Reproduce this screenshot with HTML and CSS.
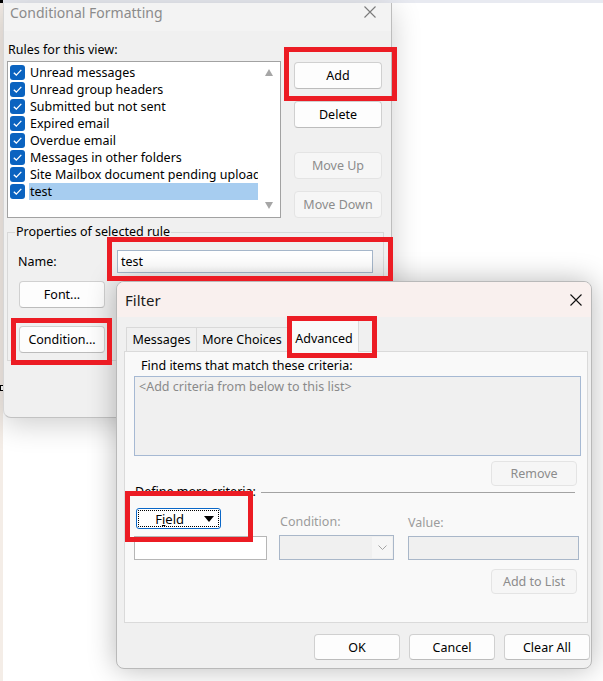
FILE: index.html
```html
<!DOCTYPE html>
<html lang="en">
<head>
  <meta charset="UTF-8" />
  <title>Conditional Formatting</title>
  <link rel="stylesheet" href="styles.css">
</head>
<body>
  <div class="desk-top"></div>
  <div class="desk-left"></div>
  <div class="desk-mark corner"></div>
  <div class="desk-mark square"></div>

  <!-- Conditional Formatting dialog -->
  <div class="dialog cf">
    <div class="cf-title">
      <span>Conditional Formatting</span>
      <svg class="close" width="12" height="12" viewBox="0 0 12 12"><path d="M0.5 0.5 L11.5 11.5 M11.5 0.5 L0.5 11.5" stroke="#7a7a7a" stroke-width="1.1" fill="none"/></svg>
    </div>
    <div class="cf-body">
      <div class="rules-row">
        <div class="rules-col">
          <div class="label">Rules for this view:</div>
          <div class="rule-list">
            <div class="rule-items">
              <div class="rule"><span class="check"><svg width="15" height="15" viewBox="0 0 15 15"><path d="M3.8 7.8 L6.3 10.1 L11.3 4.9" stroke="#fff" stroke-width="1.3" fill="none"/></svg></span><span class="rule-name">Unread messages</span></div>
              <div class="rule"><span class="check"><svg width="15" height="15" viewBox="0 0 15 15"><path d="M3.8 7.8 L6.3 10.1 L11.3 4.9" stroke="#fff" stroke-width="1.3" fill="none"/></svg></span><span class="rule-name">Unread group headers</span></div>
              <div class="rule"><span class="check"><svg width="15" height="15" viewBox="0 0 15 15"><path d="M3.8 7.8 L6.3 10.1 L11.3 4.9" stroke="#fff" stroke-width="1.3" fill="none"/></svg></span><span class="rule-name">Submitted but not sent</span></div>
              <div class="rule"><span class="check"><svg width="15" height="15" viewBox="0 0 15 15"><path d="M3.8 7.8 L6.3 10.1 L11.3 4.9" stroke="#fff" stroke-width="1.3" fill="none"/></svg></span><span class="rule-name">Expired email</span></div>
              <div class="rule"><span class="check"><svg width="15" height="15" viewBox="0 0 15 15"><path d="M3.8 7.8 L6.3 10.1 L11.3 4.9" stroke="#fff" stroke-width="1.3" fill="none"/></svg></span><span class="rule-name">Overdue email</span></div>
              <div class="rule"><span class="check"><svg width="15" height="15" viewBox="0 0 15 15"><path d="M3.8 7.8 L6.3 10.1 L11.3 4.9" stroke="#fff" stroke-width="1.3" fill="none"/></svg></span><span class="rule-name">Messages in other folders</span></div>
              <div class="rule"><span class="check"><svg width="15" height="15" viewBox="0 0 15 15"><path d="M3.8 7.8 L6.3 10.1 L11.3 4.9" stroke="#fff" stroke-width="1.3" fill="none"/></svg></span><span class="rule-name">Site Mailbox document pending upload</span></div>
              <div class="rule selected"><span class="check"><svg width="15" height="15" viewBox="0 0 15 15"><path d="M3.8 7.8 L6.3 10.1 L11.3 4.9" stroke="#fff" stroke-width="1.3" fill="none"/></svg></span><span class="rule-name">test</span></div>
            </div>
            <div class="scrollbar">
              <span class="arrow up"></span>
              <span class="arrow down"></span>
            </div>
          </div>
        </div>
        <div class="rule-buttons">
          <button class="btn">Add</button>
          <button class="btn">Delete</button>
          <button class="btn disabled">Move Up</button>
          <button class="btn disabled">Move Down</button>
        </div>
      </div>

      <fieldset class="props">
        <legend>Properties of selected rule</legend>
        <div class="props-body">
          <div class="name-row">
            <span class="name-label">Name:</span>
            <div class="textbox">test</div>
          </div>
          <button class="btn small font-btn">Font...</button>
          <button class="btn small cond-btn">Condition...</button>
        </div>
      </fieldset>
    </div>
  </div>

  <!-- Filter dialog -->
  <div class="dialog filter">
    <div class="filter-title">
      <span>Filter</span>
      <svg class="close" width="12" height="12" viewBox="0 0 12 12"><path d="M0.5 0.5 L11.5 11.5 M11.5 0.5 L0.5 11.5" stroke="#111" stroke-width="1.1" fill="none"/></svg>
    </div>
    <div class="tabs">
      <div class="tab first">Messages</div>
      <div class="tab">More Choices</div>
      <div class="tab active">Advanced</div>
    </div>
    <div class="panel">
      <div class="find-label">Find items that match these criteria:</div>
      <div class="criteria-box">&lt;Add criteria from below to this list&gt;</div>
      <div class="right-row"><button class="btn disabled panel-btn">Remove</button></div>
      <div class="define-row">
        <span>Define more criteria:</span>
        <span class="rule-line"></span>
      </div>
      <div class="criteria-grid">
        <div class="col col-field">
          <button class="field-btn"><span class="field-text">F<span class="accel">i</span>eld</span><span class="drop"></span></button>
          <div class="input white"></div>
        </div>
        <div class="col col-cond">
          <span class="muted">Condition:</span>
          <div class="combo">
            <span class="combo-arrow"><svg width="9" height="5" viewBox="0 0 9 5"><path d="M0.5 0.5 L4.5 4.5 L8.5 0.5" stroke="#a4a4a4" stroke-width="1" fill="none"/></svg></span>
          </div>
        </div>
        <div class="col col-value">
          <span class="muted">Value:</span>
          <div class="input grey"></div>
        </div>
      </div>
      <div class="right-row add-row"><button class="btn disabled panel-btn">Add to List</button></div>
    </div>
    <div class="filter-buttons">
      <button class="btn footer-btn">OK</button>
      <button class="btn footer-btn">Cancel</button>
      <button class="btn footer-btn">Clear All</button>
    </div>
  </div>

  <!-- red highlight boxes -->
  <div class="mark mark-add"></div>
  <div class="mark mark-name"></div>
  <div class="mark mark-cond"></div>
  <div class="mark mark-adv"></div>
  <div class="mark mark-field"></div>
</body>
</html>
```

FILE: styles.css
```css
* {
  box-sizing: border-box;
}

body {
  margin: 0;
  width: 603px;
  height: 681px;
  overflow: hidden;
  position: relative;
  background: #fff;
  font-family: "Noto Sans", "Open Sans", sans-serif;
  font-size: 12.5px;
  color: #000;
}

/* desktop bits behind the dialogs */
.desk-top {
  position: absolute;
  left: 0;
  top: 0;
  width: 603px;
  height: 3px;
  background: #e8eaf1;
}

.desk-left {
  position: absolute;
  left: 0;
  top: 0;
  width: 3px;
  height: 681px;
  background: #f4ede7;
}

.desk-mark {
  position: absolute;
  left: 0;
  border: 1px solid #000;
  background: #fff;
}

.desk-mark.corner {
  top: 0;
  width: 3px;
  height: 3px;
  background: #000;
}

.desk-mark.square {
  top: 385px;
  width: 4px;
  height: 6px;
}

.dialog {
  position: absolute;
  background: #f0f0f0;
}

.close {
  flex: none;
}

/* Conditional Formatting */
.cf {
  left: 3px;
  top: 3px;
  width: 389px;
  height: 415px;
  border-left: 1px solid #d6d6d6;
  border-right: 1px solid #bdbdbd;
  border-bottom: 1px solid #c2c2c2;
  border-radius: 0 0 8px 8px;
  box-shadow: 0 6px 30px rgba(0, 0, 0, 0.2);
}

.cf-title {
  height: 28px;
  background: #f3f3f3;
  display: flex;
  justify-content: space-between;
  align-items: flex-start;
  padding: 1px 15px 0 6px;
  font-size: 14px;
  line-height: 18px;
  color: #8b8b8b;
}

.cf-title .close {
  margin-top: 2px;
}

.cf-body {
  padding: 11px 0 0 3px;
}

.rules-row {
  display: flex;
  align-items: flex-start;
}

.label {
  margin: 0 0 3px 1px;
  line-height: 16px;
}

.rule-list {
  width: 274px;
  height: 157px;
  border: 1px solid #a2a2a2;
  background: #fff;
  display: flex;
}

.rule-items {
  width: 250px;
  padding-top: 2px;
  overflow: hidden;
}

.rule {
  display: flex;
  align-items: center;
  height: 17px;
  padding-left: 2px;
  white-space: nowrap;
}

.check {
  width: 15px;
  height: 15px;
  flex: none;
  display: flex;
  border-radius: 3px;
  background: #0a63c0;
  margin-right: 4px;
}

.rule-name {
  flex: 1;
  height: 17px;
  line-height: 17px;
  padding-left: 1px;
  overflow: hidden;
}

.rule.selected .rule-name {
  background: #a7cdf0;
}

.scrollbar {
  width: 22px;
  display: flex;
  flex-direction: column;
  justify-content: space-between;
  align-items: center;
  padding: 7px 0 8px;
}

.arrow {
  width: 0;
  height: 0;
  border-left: 4.5px solid transparent;
  border-right: 4.5px solid transparent;
}

.arrow.up {
  border-bottom: 7px solid #a6a6a6;
}

.arrow.down {
  border-top: 7px solid #a6a6a6;
}

.rule-buttons {
  margin-left: 13px;
  padding-top: 20px;
  display: flex;
  flex-direction: column;
}

.btn {
  width: 88px;
  height: 27px;
  padding: 0;
  border: 1px solid #d0d0d0;
  border-bottom-color: #bcbcbc;
  border-radius: 4px;
  background: #fdfdfd;
  font: inherit;
  color: #000;
}

.btn.disabled {
  background: #f6f6f6;
  border-color: #e4e4e4;
  color: #8c8c8c;
}

.rule-buttons .btn:nth-child(2) {
  margin-top: 12px;
}

.rule-buttons .btn:nth-child(3) {
  margin-top: 24px;
}

.rule-buttons .btn:nth-child(4) {
  margin-top: 12px;
}

.props {
  margin: 6px 0 0;
  width: 377px;
  border: 1px solid #d8d8d8;
  padding: 0 0 7px 11px;
  min-width: 0;
}

.props legend {
  padding: 0 1px;
  margin-left: -4px;
  line-height: 16px;
}

.props-body {
  display: flex;
  flex-direction: column;
  align-items: flex-start;
}

.name-row {
  margin-top: 10px;
  display: flex;
  align-items: center;
  height: 23px;
}

.name-label {
  width: 99px;
  margin-left: -1px;
}

.textbox {
  width: 256px;
  height: 23px;
  border: 1px solid #a5b6ca;
  background: linear-gradient(#fff 70%, #f6f6f6);
  padding-left: 3px;
  line-height: 21px;
}

.btn.small {
  width: 86px;
}

.font-btn {
  margin-top: 8px;
}

.cond-btn {
  margin-top: 18px;
}

/* Filter */
.filter {
  left: 116px;
  top: 281px;
  width: 476px;
  height: 388px;
  border: 1px solid #b9b9b9;
  border-radius: 8px;
  box-shadow: 0 0 28px rgba(0, 0, 0, 0.28);
  overflow: hidden;
}

.filter-title {
  height: 35px;
  background: #f9f0ee;
  display: flex;
  justify-content: space-between;
  align-items: center;
  padding: 0 9px 0 8px;
  font-size: 15px;
  color: #1b1b1b;
}

.tabs {
  height: 34px;
  padding-left: 9px;
  display: flex;
  align-items: flex-end;
  position: relative;
  z-index: 1;
}

.tab {
  height: 24px;
  padding-top: 2px;
  line-height: 20px;
  text-align: center;
  border: 1px solid #d9d9d9;
  border-bottom: none;
  background: #f0f0f0;
  width: 92px;
}

.tab.first {
  width: 70px;
  border-right: none;
}

.tab.active {
  width: 70px;
  height: 32px;
  margin-left: 1px;
  margin-bottom: -1px;
  padding-top: 8px;
  background: #f9f9f9;
}

.panel {
  margin-left: 7px;
  width: 464px;
  height: 272px;
  border: 1px solid #dadada;
  background: #f9f9f9;
}

.find-label {
  margin: 6px 0 0 16px;
  line-height: 16px;
}

.criteria-box {
  margin: 2px 0 0 9px;
  width: 447px;
  height: 80px;
  border: 1px solid #a6b9d3;
  background: #f0f0f0;
  padding: 2px 4px;
  line-height: 16px;
  color: #8a8a8a;
}

.right-row {
  display: flex;
  justify-content: flex-end;
  padding-right: 10px;
  margin-top: 5px;
}

.btn.panel-btn {
  width: 86px;
  height: 25px;
}

.define-row {
  margin-top: -2px;
  padding: 0 12px 0 10px;
  display: flex;
  align-items: center;
  line-height: 16px;
}

.rule-line {
  flex: 1;
  height: 1px;
  margin-left: 5px;
  background: #a3a3a3;
}

.criteria-grid {
  margin-top: 8px;
  padding-left: 9px;
  display: flex;
  align-items: flex-end;
}

.col {
  display: flex;
  flex-direction: column;
  align-items: flex-start;
}

.col-field {
  width: 133px;
}

.col-cond {
  width: 115px;
  margin-left: 12px;
}

.col-value {
  width: 171px;
  margin-left: 14px;
}

.field-btn {
  margin: 0 0 7px 2px;
  width: 85px;
  height: 21px;
  padding: 0 6px 0 0;
  border: 1px solid #0a67c7;
  border-radius: 3px;
  background: #fff;
  outline: 1px dotted #000;
  outline-offset: -3px;
  font: inherit;
  font-size: 13px;
  color: #000;
  display: flex;
  align-items: center;
  justify-content: flex-end;
  gap: 20px;
  line-height: 18px;
}

.accel {
  text-decoration: underline;
}

.drop {
  width: 0;
  height: 0;
  border-left: 5.5px solid transparent;
  border-right: 5.5px solid transparent;
  border-top: 6px solid #000;
}

.input {
  width: 100%;
  height: 24px;
}

.input.white {
  border: 1px solid #b6b6b6;
  background: #fff;
}

.input.grey {
  border: 1px solid #a9b7c9;
  background: #f0f0f0;
}

.muted {
  color: #9c9c9c;
  line-height: 16px;
  margin-bottom: 5px;
}

.col-cond .muted {
  margin-left: 1px;
}

.combo {
  width: 115px;
  height: 25px;
  border: 1px solid #a9b7c9;
  background: #f0f0f0;
  display: flex;
  justify-content: flex-end;
  padding: 1px;
}

.combo-arrow {
  width: 20px;
  background: #f6f6f6;
  display: flex;
  align-items: center;
  justify-content: center;
}

.add-row {
  margin-top: 9px;
}

.filter-buttons {
  margin-top: 11px;
  padding-right: 1px;
  display: flex;
  justify-content: flex-end;
  gap: 9px;
}

.btn.footer-btn {
  width: 86px;
  height: 26px;
}

/* red annotation boxes */
.mark {
  position: absolute;
  border: 5px solid #ec1c24;
  z-index: 5;
}

.mark-add {
  left: 284px;
  top: 47px;
  width: 113px;
  height: 54px;
}

.mark-name {
  left: 107px;
  top: 237px;
  width: 286px;
  height: 44px;
}

.mark-cond {
  left: 11px;
  top: 318px;
  width: 101px;
  height: 47px;
}

.mark-adv {
  left: 287px;
  top: 316px;
  width: 90px;
  height: 42px;
}

.mark-field {
  left: 125px;
  top: 491px;
  width: 128px;
  height: 51px;
}
```
